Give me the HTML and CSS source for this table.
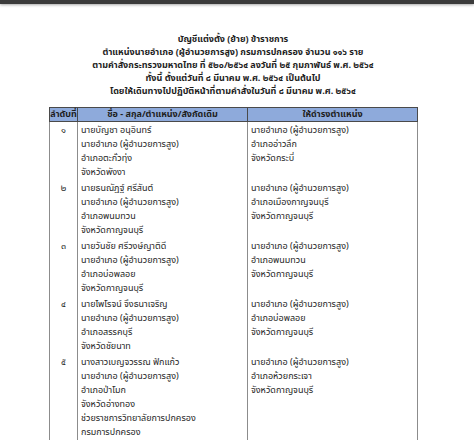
FILE: index.html
```html
<!DOCTYPE html>
<html lang="th">
<head>
<meta charset="utf-8">
<title>บัญชีแต่งตั้ง (ย้าย) ข้าราชการ</title>
<link rel="stylesheet" href="styles.css">
</head>
<body>
<div class="topbar"></div>
<main class="page">
  <header class="title">
    <p>บัญชีแต่งตั้ง (ย้าย) ข้าราชการ</p>
    <p>ตำแหน่งนายอำเภอ (ผู้อำนวยการสูง) กรมการปกครอง จำนวน ๑๑๖ ราย</p>
    <p>ตามคำสั่งกระทรวงมหาดไทย ที่ ๕๒๐/๒๕๖๔ ลงวันที่ ๒๕ กุมภาพันธ์ พ.ศ. ๒๕๖๔</p>
    <p>ทั้งนี้ ตั้งแต่วันที่ ๘ มีนาคม พ.ศ. ๒๕๖๔ เป็นต้นไป</p>
    <p>โดยให้เดินทางไปปฏิบัติหน้าที่ตามคำสั่งในวันที่ ๘ มีนาคม พ.ศ. ๒๕๖๔</p>
  </header>
  <table class="list">
    <colgroup>
      <col class="c-no">
      <col class="c-old">
      <col class="c-new">
    </colgroup>
    <thead>
      <tr>
        <th>ลำดับที่</th>
        <th>ชื่อ - สกุล/ตำแหน่ง/สังกัดเดิม</th>
        <th>ให้ดำรงตำแหน่ง</th>
      </tr>
    </thead>
    <tbody>
      <tr>
        <td class="no">๑</td>
        <td>นายบัญชา อนุอินทร์<br>นายอำเภอ (ผู้อำนวยการสูง)<br>อำเภอตะกั่วทุ่ง<br>จังหวัดพังงา</td>
        <td>นายอำเภอ (ผู้อำนวยการสูง)<br>อำเภออ่าวลึก<br>จังหวัดกระบี่</td>
      </tr>
      <tr>
        <td class="no">๒</td>
        <td>นายธนณัฏฐ์ ศรีสันต์<br>นายอำเภอ (ผู้อำนวยการสูง)<br>อำเภอพนมทวน<br>จังหวัดกาญจนบุรี</td>
        <td>นายอำเภอ (ผู้อำนวยการสูง)<br>อำเภอเมืองกาญจนบุรี<br>จังหวัดกาญจนบุรี</td>
      </tr>
      <tr>
        <td class="no">๓</td>
        <td>นายวันชัย ศรีวงษ์ญาติดี<br>นายอำเภอ (ผู้อำนวยการสูง)<br>อำเภอบ่อพลอย<br>จังหวัดกาญจนบุรี</td>
        <td>นายอำเภอ (ผู้อำนวยการสูง)<br>อำเภอพนมทวน<br>จังหวัดกาญจนบุรี</td>
      </tr>
      <tr>
        <td class="no">๔</td>
        <td>นายไพโรจน์ จึงธนาเจริญ<br>นายอำเภอ (ผู้อำนวยการสูง)<br>อำเภอสรรคบุรี<br>จังหวัดชัยนาท</td>
        <td>นายอำเภอ (ผู้อำนวยการสูง)<br>อำเภอบ่อพลอย<br>จังหวัดกาญจนบุรี</td>
      </tr>
      <tr class="last">
        <td class="no">๕</td>
        <td>นางสาวเบญจวรรณ ฟักแก้ว<br>นายอำเภอ (ผู้อำนวยการสูง)<br>อำเภอป่าโมก<br>จังหวัดอ่างทอง<br>ช่วยราชการวิทยาลัยการปกครอง<br>กรมการปกครอง</td>
        <td>นายอำเภอ (ผู้อำนวยการสูง)<br>อำเภอห้วยกระเจา<br>จังหวัดกาญจนบุรี</td>
      </tr>
    </tbody>
  </table>
</main>
</body>
</html>
```

FILE: styles.css
```css
html, body {
  margin: 0;
  padding: 0;
  background: #ffffff;
}

body {
  font-family: "Noto Sans Thai", "Noto Sans", "DejaVu Sans", sans-serif;
  color: #1e1e1e;
  overflow: hidden;
}

.topbar {
  height: 4px;
  background: #3b3b3b;
  box-shadow: 0 1px 3px rgba(0, 0, 0, 0.35);
}

.page {
  padding: 29px 0 0 49px;
}

.title {
  width: 368px;
  text-align: center;
  font-weight: bold;
  font-size: 9px;
  line-height: 13px;
}

.title p {
  margin: 0;
}

.list {
  margin-top: 9px;
  border-collapse: collapse;
  table-layout: fixed;
  width: 368px;
  font-size: 9px;
  line-height: 14px;
}

.c-no { width: 28px; }
.c-old { width: 170px; }
.c-new { width: 170px; }

.list th {
  background: #8eaadb;
  border: 1px solid #4a4a4a;
  font-weight: bold;
  height: 13px;
  padding: 0;
  line-height: 13px;
  text-align: center;
  white-space: nowrap;
}

.list td {
  border-left: 1px solid #8c8c8c;
  border-right: 1px solid #8c8c8c;
  vertical-align: top;
  padding: 1px 0 1px 3px;
  white-space: nowrap;
}

.list td.no {
  text-align: center;
  padding-left: 0;
}

.list tr.last td {
  padding-bottom: 40px;
}
```
